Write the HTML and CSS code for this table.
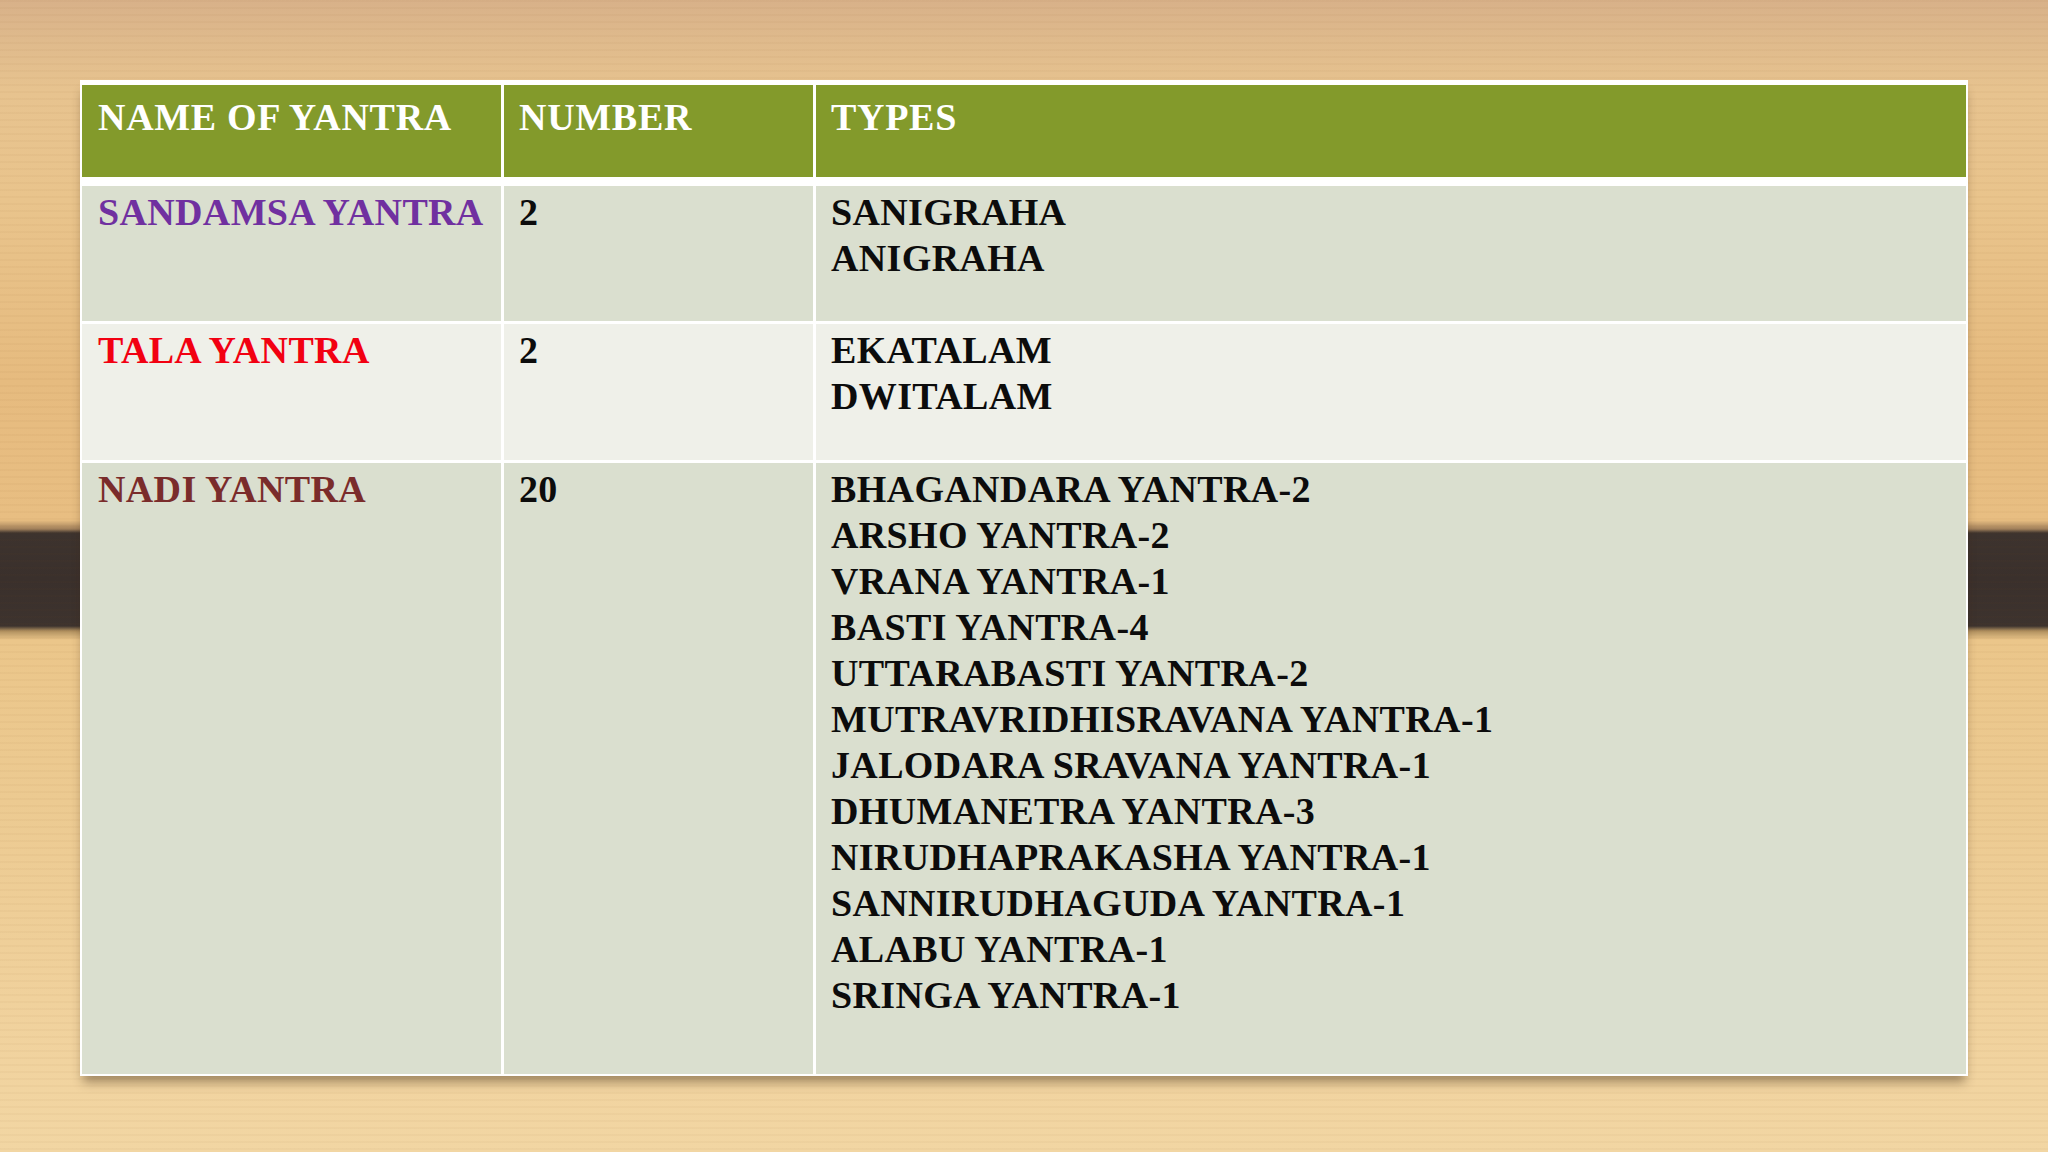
FILE: index.html
```html
<!DOCTYPE html>
<html lang="en">
<head>
<meta charset="utf-8">
<title>Yantra</title>
<link rel="stylesheet" href="styles.css">
</head>
<body>
<div class="slide">
  <div class="table">
    <div class="cell head c1">NAME OF YANTRA</div>
    <div class="cell head c2">NUMBER</div>
    <div class="cell head c3">TYPES</div>

    <div class="cell odd c1 purple">SANDAMSA YANTRA</div>
    <div class="cell odd c2">2</div>
    <div class="cell odd c3">
      <div>SANIGRAHA</div>
      <div>ANIGRAHA</div>
    </div>

    <div class="cell even c1 red">TALA YANTRA</div>
    <div class="cell even c2">2</div>
    <div class="cell even c3">
      <div>EKATALAM</div>
      <div>DWITALAM</div>
    </div>

    <div class="cell odd c1 maroon">NADI YANTRA</div>
    <div class="cell odd c2">20</div>
    <div class="cell odd c3">
      <div>BHAGANDARA YANTRA-2</div>
      <div>ARSHO YANTRA-2</div>
      <div>VRANA YANTRA-1</div>
      <div>BASTI YANTRA-4</div>
      <div>UTTARABASTI YANTRA-2</div>
      <div>MUTRAVRIDHISRAVANA YANTRA-1</div>
      <div>JALODARA SRAVANA YANTRA-1</div>
      <div>DHUMANETRA YANTRA-3</div>
      <div>NIRUDHAPRAKASHA YANTRA-1</div>
      <div>SANNIRUDHAGUDA YANTRA-1</div>
      <div>ALABU YANTRA-1</div>
      <div>SRINGA YANTRA-1</div>
    </div>
  </div>
</div>
</body>
</html>
```
FILE: styles.css
```css
html, body {
  margin: 0;
  padding: 0;
  width: 2048px;
  height: 1152px;
  overflow: hidden;
}

body {
  background:
    repeating-linear-gradient(180deg, rgba(120, 70, 20, 0.035) 0px, rgba(120, 70, 20, 0.035) 2px, rgba(255, 255, 255, 0) 2px, rgba(255, 255, 255, 0) 7px),
    linear-gradient(180deg,
      #d8b189 0px,
      #dfba8c 40px,
      #e7c38f 90px,
      #e9c48c 200px,
      #e6bb7f 380px,
      #e8be82 520px,
      #a07f5a 529px,
      #3d332e 533px,
      #3a302c 580px,
      #3d332e 626px,
      #b0905f 631px,
      #ebc68a 640px,
      #ecca91 800px,
      #f0d19c 1000px,
      #f2d6a3 1152px);
}

.slide {
  width: 2048px;
  height: 1152px;
  padding: 80px 0 0 80px;
  box-sizing: border-box;
}

.table {
  width: 1888px;
  height: 996px;
  box-sizing: border-box;
  background: #ffffff;
  padding: 5px 2px 2px 2px;
  display: grid;
  grid-template-columns: 419px 309px 1fr;
  grid-template-rows: 98px 135px 136px 1fr;
  column-gap: 3px;
  row-gap: 3px;
  box-shadow: 0 9px 10px -3px rgba(60, 40, 20, 0.45);
  font-family: "Liberation Serif", "DejaVu Serif", serif;
  font-weight: bold;
  font-size: 38px;
  letter-spacing: 0.35px;
  line-height: 46px;
  color: #0c0c0c;
}

.cell {
  padding: 3px 15px 0 15px;
  white-space: nowrap;
}

.cell.c1 {
  padding-left: 16px;
}

.head {
  background: #839a2b;
  color: #ffffff;
  padding-top: 9px;
  margin-bottom: 6px;
  letter-spacing: 0.7px;
}

.odd {
  background: #dadfcf;
}

.even {
  background: #eff0e9;
}

.purple {
  color: #7030a0;
}

.red {
  color: #f20011;
}

.maroon {
  color: #7a2c2b;
}
```
